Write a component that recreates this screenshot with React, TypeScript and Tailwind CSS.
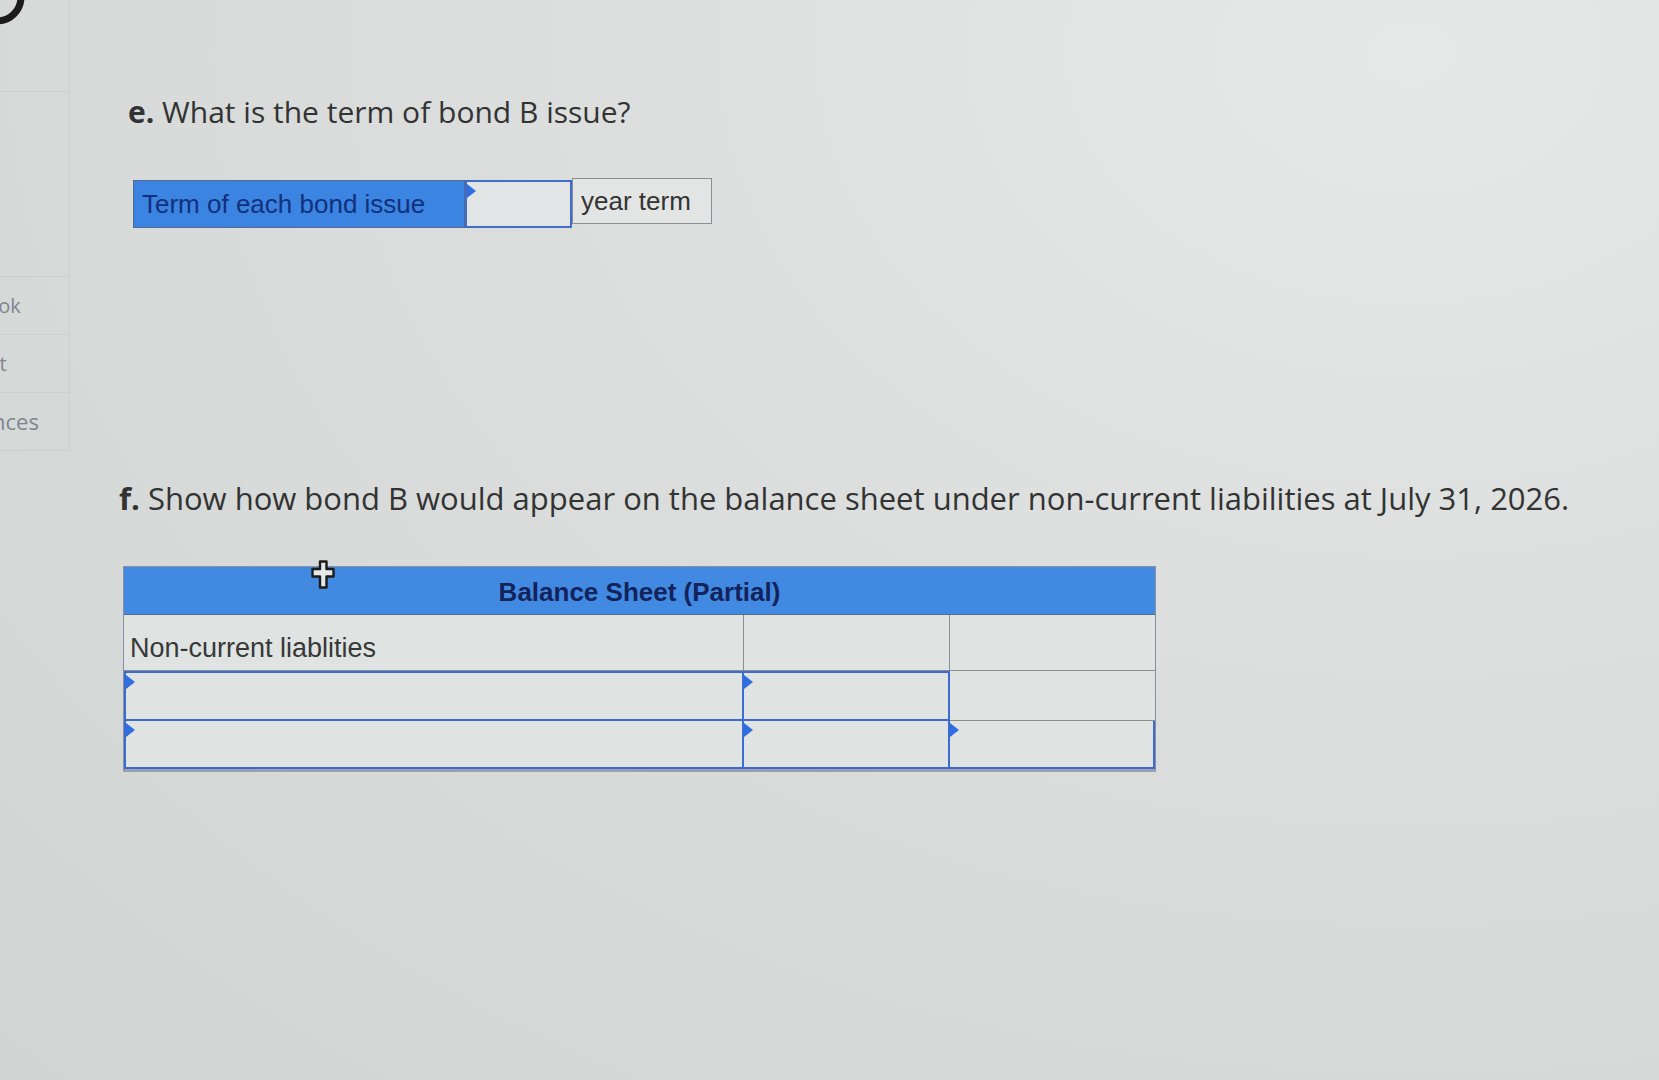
import React from 'react';

const font = "font-['Open_Sans','Lato',sans-serif]";
const arial = "font-['Liberation_Sans',Arial,sans-serif]";

// blue marker shown at the top-left of an input cell
const Marker: React.FC = () => (
    <span className="absolute left-0 top-[2px] w-0 h-0 border-y-[7px] border-y-transparent border-l-[9px] border-l-[#2f6ee0]" />
);

const sideItems = [
    { label: 'eBook', shift: '-ml-[38px] text-[20px]' },
    { label: 'Print', shift: '-ml-[38px] text-[20px]' },
    { label: 'References', shift: '-ml-[75px] text-[22px]' },
];

const Sidebar: React.FC = () => (
    <div className="w-[70px] shrink-0 self-start overflow-hidden border-r border-[#cdd0cf]">
        <div className="h-[92px] border-b border-[#cdd0cf]" />
        <div className="h-[185px] border-b border-[#cdd0cf]" />
        {sideItems.map((item) => (
            <div key={item.label} className="h-[58px] flex items-center border-b border-[#cdd0cf]">
                <span className={`${font} ${item.shift} text-[#7f8592] whitespace-nowrap`}>{item.label}</span>
            </div>
        ))}
    </div>
);

const TermRow: React.FC = () => (
    <div className="flex h-[48px] ml-[63px] mt-[50px]">
        <div className={`${arial} w-[332px] bg-[#3b84e1] border border-[#55688f] flex items-center pl-2 text-[26px] text-[#12307c]`}>
            Term of each bond issue
        </div>
        <div className="relative w-[107px] bg-[#e1e5e5] border-2 border-[#3f6dc9]">
            <Marker />
        </div>
        <div className={`${arial} w-[140px] h-[46px] -mt-[2px] bg-[#e2e5e4] border border-[#8a8e92] flex items-center pl-2 text-[26px] text-[#333]`}>
            year term
        </div>
    </div>
);

const BalanceSheet: React.FC = () => (
    <div className="ml-[53px] mt-[50px] w-[1033px] border border-[#8a90a0] border-b-[3px] border-b-[#9aa0b2] bg-[#dfe3e2]">
        <div className={`${arial} h-[48px] bg-[#4289e1] border-b border-[#5b6b8e] flex items-center justify-center pt-1 font-bold text-[26px] text-[#13235c]`}>
            Balance Sheet (Partial)
        </div>
        <div className="grid grid-cols-[620px_206px_1fr] h-[56px] border-b border-[#8a8e92]">
            <div className={`${arial} border-r border-[#8a8e92] flex items-center pt-3 pl-[6px] text-[27px] text-[#383838]`}>
                Non-current liablities
            </div>
            <div className="border-r border-[#8a8e92]" />
            <div />
        </div>
        <div className="grid grid-cols-[620px_206px_1fr] h-[50px]">
            <div className="relative border-2 border-[#3c6ccf]"><Marker /></div>
            <div className="relative border-2 border-l-0 border-[#3c6ccf]"><Marker /></div>
            <div className="border-b border-[#8a8e92]" />
        </div>
        <div className="grid grid-cols-[620px_206px_1fr] h-[48px]">
            <div className="relative border-2 border-t-0 border-[#3c6ccf]"><Marker /></div>
            <div className="relative border-2 border-t-0 border-l-0 border-[#3c6ccf]"><Marker /></div>
            <div className="relative border-2 border-t-0 border-l-0 border-[#3c6ccf]"><Marker /></div>
        </div>
    </div>
);

export default function App() {
    return (
        <div className="relative w-full h-[1080px] overflow-hidden flex bg-[radial-gradient(ellipse_at_85%_5%,#e7e9e8_0%,#dcdfde_40%,#d0d4d3_100%)]">
            {/* partly visible ring in the corner */}
            <svg className="absolute left-0 top-0" width="40" height="40" viewBox="0 0 40 40">
                <circle cx="-3" cy="-3" r="24" fill="none" stroke="#1b1b1b" strokeWidth="7" />
            </svg>

            <Sidebar />

            <main className="flex-1 pt-[94px]">
                <h2 className={`${font} ml-[58px] text-[30px] leading-[36px] text-[#333]`}>
                    <span className="font-bold">e.</span> What is the term of bond B issue?
                </h2>
                <TermRow />

                <h2 className={`${font} ml-[49px] mt-[252px] text-[31px] leading-[36px] text-[#333] whitespace-nowrap`}>
                    <span className="font-bold">f.</span> Show how bond B would appear on the balance sheet under non-current liabilities at July 31, 2026.
                </h2>
                <BalanceSheet />
            </main>

            {/* mouse cursor */}
            <svg className="absolute left-[311px] top-[560px]" width="24" height="30" viewBox="0 0 24 30">
                <path d="M9 1.5h6.5v7.5h7v7.5h-7v11h-6.5v-11h-7.5v-7.5h7.5z" fill="#e6e8ea" stroke="#1c1c1c" strokeWidth="2.4" strokeLinejoin="round" />
            </svg>
        </div>
    );
}
